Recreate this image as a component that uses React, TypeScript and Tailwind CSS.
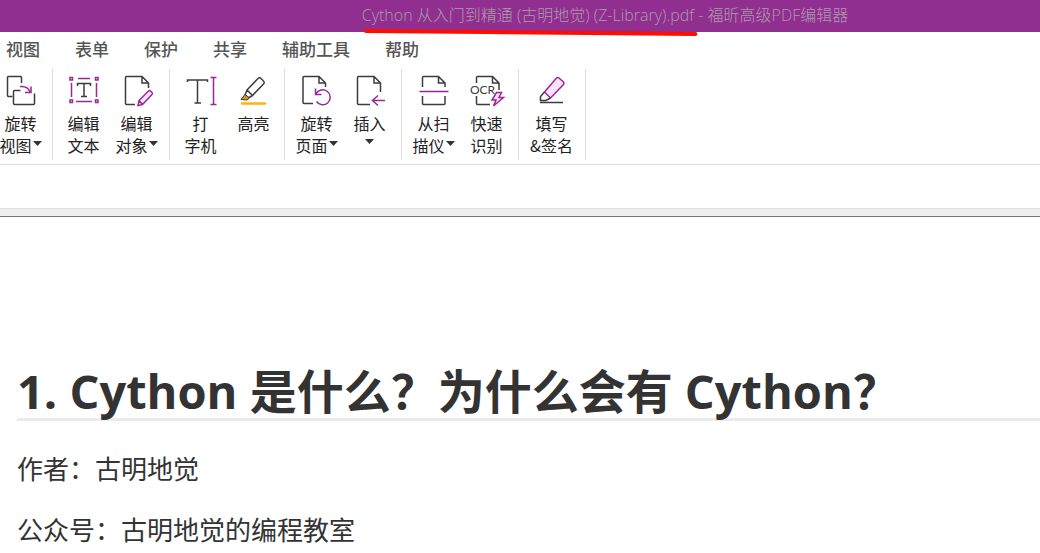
import React from 'react';
import clsx from 'clsx';

const DARK = '#3c3c3c';
const PURPLE = '#962996';

const Icon: React.FC<{ children: React.ReactNode }> = ({ children }) => (
  <svg
    className="w-8 h-8 shrink-0 overflow-visible"
    viewBox="0 0 32 32"
    fill="none"
    stroke={DARK}
    strokeWidth="1.5"
    aria-hidden="true"
  >
    {children}
  </svg>
);

const Caret = () => (
  <svg className="w-[9px] h-[5px] shrink-0" viewBox="0 0 9 5" fill="#333333" aria-hidden="true">
    <path d="M0 0h9L4.5 5z" />
  </svg>
);

const RotateViewIcon = () => (
  <Icon>
    <path d="M7.5 21.5H3.5a1 1 0 0 1-1-1V2.5a1 1 0 0 1 1-1H15.5a1 1 0 0 1 1 1V8" />
    <path d="M15.5 15.5H9.500a1 1 0 0 0-1 1V28.5a1 1 0 0 0 1 1h19a1 1 0 0 0 1-1V18.5" />
    <path d="M15 11.5c5-.5 8.500 1 10 5.500M26 11.500v6h-6" stroke={PURPLE} />
  </Icon>
);

const EditTextIcon = () => (
  <Icon>
    <g stroke={PURPLE}>
      <path d="M10 3.5h12M8 26.5h16M3.5 8v14M28.5 8v14" />
      <path d="M2 2.5h2.5v2.5H2zM27.5 2.5h2.5v2.5h-2.5zM2 25h2.5v2.5H2zM27.5 25h2.5v2.5h-2.5z" fill="#ffffff" />
    </g>
    <path d="M9.5 11V8.5h13V11M16 8.5v13M13 21.5h6" />
  </Icon>
);

const EditObjectIcon = () => (
  <Icon>
    <path d="M14 29.5H5.5a1 1 0 0 1-1-1V2.5a1 1 0 0 1 1-1H21L27.5 8V13M21 1.5V8h6.5" />
    <path
      d="M17 30.5l1-5L27.5 16a1.5 1.5 0 0 1 2 0l1.5 1.5a1.5 1.5 0 0 1 0 2L21.5 29.5zM18 25.5l3.5 4"
      stroke={PURPLE}
      fill="#fbe3fb"
    />
  </Icon>
);

const TypewriterIcon = () => (
  <Icon>
    <path d="M2.5 7V5h20v2M12.5 5v23M9.5 28h6.5" />
    <path d="M28.5 3v26M25.5 2.5h6M25.5 29.5h6" stroke={PURPLE} />
  </Icon>
);

const HighlightIcon = () => (
  <Icon>
    <path d="M9 15L20 3.5a2 2 0 0 1 3 0l2.5 2.5a2 2 0 0 1 0 3L14.5 20.5zM9 15l-2 5 3.5 3 4-2.5" />
    <path d="M7 19.5L3 24.5l6.5 .5 1.5-2.5z" fill="#d69512" strokeWidth="1" />
    <path d="M4 28.5h23" stroke="#fdb515" strokeWidth="2.5" strokeLinecap="round" />
  </Icon>
);

const RotatePageIcon = () => (
  <Icon>
    <path d="M12 28.5H3a1 1 0 0 1-1-1V2.5a1 1 0 0 1 1-1H18L24.5 8V12M18 1.5V8h6.5" />
    <path d="M14.5 13.5v6h6M15 19a7.5 7.5 0 1 1 .5 7.5" stroke={PURPLE} />
  </Icon>
);

const InsertIcon = () => (
  <Icon>
    <path d="M16 29.5H4.5a1 1 0 0 1-1-1V2.5a1 1 0 0 1 1-1H20L26.5 8V17M20 1.5V8h6.5" />
    <path d="M31 25.5H18.5M24 20.5l-5.5 5 5.5 5" stroke={PURPLE} />
  </Icon>
);

const ScannerIcon = () => (
  <Icon>
    <path d="M4.5 12V2.5a1 1 0 0 1 1-1H20.5L27 8V12M20.5 1.5V8h6.5M4.5 21v7.5a1 1 0 0 0 1 1H26a1 1 0 0 0 1-1V21" />
    <path d="M1.5 16.5h29" stroke={PURPLE} />
  </Icon>
);

const OcrIcon = () => (
  <Icon>
    <path d="M5.5 8V2.5a1 1 0 0 1 1-1H21.5L28 8V15M21.5 1.5V8h6.5M5.5 21v7.5a1 1 0 0 0 1 1H19" />
    <text
      x="-1"
      y="18.5"
      fontSize="12"
      fontFamily="Lato, sans-serif"
      fill={DARK}
      stroke="none"
    >
      OCR
    </text>
    <path d="M25.5 17.5h5l-2.5 5h4.5L22.5 31l2.5-6h-4z" fill="#fbe3fb" stroke={PURPLE} />
  </Icon>
);

const FillSignIcon = () => (
  <Icon>
    <path
      d="M8.5 17L20.5 3a2 2 0 0 1 2.5 0L27.5 7a2 2 0 0 1 0 2.5L14.5 23z"
      fill="#fbe3fb"
      stroke={PURPLE}
    />
    <path d="M8.5 17l-4 4.5V25.5h5.5l4.5-2.5M4 27.5h23" />
  </Icon>
);

interface Tool {
  icon: React.ReactNode;
  lines: string[];
  caret?: boolean;
}

interface Group {
  className: string;
  tools: Tool[];
}

const groups: Group[] = [
  {
    className: 'w-[53px] justify-end pr-[5px]',
    tools: [{ icon: <RotateViewIcon />, lines: ['旋转', '视图'], caret: true }],
  },
  {
    className: 'pl-1 pr-[6px]',
    tools: [
      { icon: <EditTextIcon />, lines: ['编辑', '文本'] },
      { icon: <EditObjectIcon />, lines: ['编辑', '对象'], caret: true },
    ],
  },
  {
    className: 'px-1',
    tools: [
      { icon: <TypewriterIcon />, lines: ['打', '字机'] },
      { icon: <HighlightIcon />, lines: ['高亮'] },
    ],
  },
  {
    className: 'px-[5px]',
    tools: [
      { icon: <RotatePageIcon />, lines: ['旋转', '页面'], caret: true },
      { icon: <InsertIcon />, lines: ['插入', ''], caret: true },
    ],
  },
  {
    className: 'px-[5px]',
    tools: [
      { icon: <ScannerIcon />, lines: ['从扫', '描仪'], caret: true },
      { icon: <OcrIcon />, lines: ['快速', '识别'] },
    ],
  },
  {
    className: 'pl-[6px] pr-[7px]',
    tools: [{ icon: <FillSignIcon />, lines: ['填写', '&签名'] }],
  },
];

const menus = ['视图', '表单', '保护', '共享', '辅助工具', '帮助'];

const ToolButton: React.FC<{ tool: Tool }> = ({ tool }) => (
  <button
    type="button"
    className="w-[53px] shrink-0 flex flex-col items-center pt-[6px] text-base leading-[22px] whitespace-nowrap"
  >
    {tool.icon}
    <span className="mt-[5px]">{tool.lines[0]}</span>
    {tool.lines.length > 1 && (
      <span className="h-[22px] flex justify-center gap-px">
        {tool.lines[1] && <span>{tool.lines[1]}</span>}
        {tool.caret && (
          <span className={clsx(tool.lines[1] ? 'pt-[7px]' : 'pt-[5px]')}>
            <Caret />
          </span>
        )}
      </span>
    )}
  </button>
);

const App: React.FC = () => {
  return (
    <div className="min-h-screen overflow-hidden bg-white text-[#222222] font-['Noto_Sans_CJK_SC',sans-serif]">
      {/* Title bar */}
      <header className="h-8 bg-[#912f91] flex justify-center pl-[170px] text-base leading-[30px] text-[#ab9bab] whitespace-nowrap">
        <h1 className="font-['Open_Sans','Noto_Sans_CJK_SC',sans-serif] font-light">
          <span className="relative inline-block">
            Cython 从入门到精通 (古明地觉) (Z-Library).pdf
            <svg
              className="absolute left-0 top-7 w-full h-2 overflow-visible"
              viewBox="0 0 332 8"
              preserveAspectRatio="none"
              aria-hidden="true"
            >
              <path d="M4 3L124 4 333 6" stroke="#ff0d00" strokeWidth="4" fill="none" strokeLinecap="round" />
            </svg>
          </span>{' '}
          - 福昕高级PDF编辑器
        </h1>
      </header>

      {/* Menu */}
      <nav className="h-[37px] flex gap-[35px] pl-[6px] text-[17px] leading-[34px] font-medium text-[#555555] whitespace-nowrap">
        {menus.map((menu) => (
          <button key={menu} type="button" className="h-[34px]">
            {menu}
          </button>
        ))}
      </nav>

      {/* Ribbon */}
      <div className="flex pb-1 border-b border-[#dedede]">
        {groups.map((group, index) => (
          <div
            key={index}
            className={clsx('h-[91px] flex items-start border-r border-[#dedede]', group.className)}
          >
            {group.tools.map((tool) => (
              <ToolButton key={tool.lines.join('')} tool={tool} />
            ))}
          </div>
        ))}
      </div>

      <div className="h-[43px]" />
      <div className="h-[9px] bg-[#efefef] border-t border-b border-t-[#dedede] border-b-[#727272]" />

      {/* Document page */}
      <main className="pl-[17px] pt-[147px] text-[#333333] font-['Open_Sans','Noto_Sans_CJK_SC',sans-serif]">
        <h2 className="border-b-[3px] border-[#ebebeb] text-[47px] leading-[54px] font-bold whitespace-nowrap">
          1. Cython 是什么？为什么会有 Cython？
        </h2>
        <p className="mt-[30px] text-[26px] leading-9">作者：古明地觉</p>
        <p className="mt-[25px] text-[26px] leading-9">公众号：古明地觉的编程教室</p>
      </main>
    </div>
  );
};

export default App;
